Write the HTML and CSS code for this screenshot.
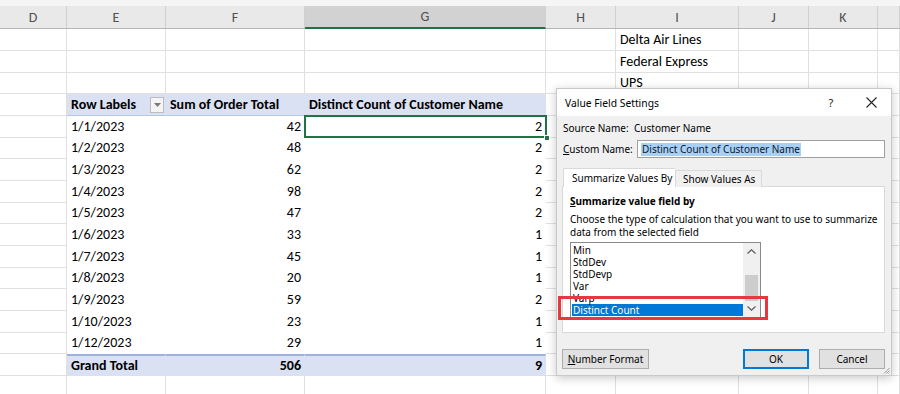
FILE: index.html
```html
<!DOCTYPE html>
<html>
<head>
<meta charset="utf-8">
<link rel="stylesheet" href="styles.css">
</head>
<body>
<div class="sheet">
  <div class="strip"></div>
  <div class="hdr">
    <div class="hc">D</div><div class="hc">E</div><div class="hc">F</div><div class="hc sel">G</div><div class="hc">H</div><div class="hc">I</div><div class="hc">J</div><div class="hc">K</div><div class="hc"></div>
  </div>
  <div class="row"><div class="c"></div><div class="c"></div><div class="c"></div><div class="c"></div><div class="c"></div><div class="c">Delta Air Lines</div><div class="c"></div><div class="c"></div><div class="c"></div></div>
  <div class="row"><div class="c"></div><div class="c"></div><div class="c"></div><div class="c"></div><div class="c"></div><div class="c">Federal Express</div><div class="c"></div><div class="c"></div><div class="c"></div></div>
  <div class="row"><div class="c"></div><div class="c"></div><div class="c"></div><div class="c"></div><div class="c"></div><div class="c">UPS</div><div class="c"></div><div class="c"></div><div class="c"></div></div>
  <div class="row"><div class="c"></div><div class="c p ph rl"><span>Row Labels</span><span class="dd"><svg width="7" height="4" viewBox="0 0 7 4"><path d="M0 0h7L3.5 4z" fill="#7a7a7a"/></svg></span></div><div class="c p ph">Sum of Order Total</div><div class="c p ph">Distinct Count of Customer Name</div><div class="c"></div><div class="c"></div><div class="c"></div><div class="c"></div><div class="c"></div></div>
  <div class="row"><div class="c"></div><div class="c p">1/1/2023</div><div class="c p r">42</div><div class="c p r selcell">2<span class="handle"></span></div><div class="c"></div><div class="c"></div><div class="c"></div><div class="c"></div><div class="c"></div></div>
  <div class="row"><div class="c"></div><div class="c p">1/2/2023</div><div class="c p r">48</div><div class="c p r">2</div><div class="c"></div><div class="c"></div><div class="c"></div><div class="c"></div><div class="c"></div></div>
  <div class="row"><div class="c"></div><div class="c p">1/3/2023</div><div class="c p r">62</div><div class="c p r">2</div><div class="c"></div><div class="c"></div><div class="c"></div><div class="c"></div><div class="c"></div></div>
  <div class="row"><div class="c"></div><div class="c p">1/4/2023</div><div class="c p r">98</div><div class="c p r">2</div><div class="c"></div><div class="c"></div><div class="c"></div><div class="c"></div><div class="c"></div></div>
  <div class="row"><div class="c"></div><div class="c p">1/5/2023</div><div class="c p r">47</div><div class="c p r">2</div><div class="c"></div><div class="c"></div><div class="c"></div><div class="c"></div><div class="c"></div></div>
  <div class="row"><div class="c"></div><div class="c p">1/6/2023</div><div class="c p r">33</div><div class="c p r">1</div><div class="c"></div><div class="c"></div><div class="c"></div><div class="c"></div><div class="c"></div></div>
  <div class="row"><div class="c"></div><div class="c p">1/7/2023</div><div class="c p r">45</div><div class="c p r">1</div><div class="c"></div><div class="c"></div><div class="c"></div><div class="c"></div><div class="c"></div></div>
  <div class="row"><div class="c"></div><div class="c p">1/8/2023</div><div class="c p r">20</div><div class="c p r">1</div><div class="c"></div><div class="c"></div><div class="c"></div><div class="c"></div><div class="c"></div></div>
  <div class="row"><div class="c"></div><div class="c p">1/9/2023</div><div class="c p r">59</div><div class="c p r">2</div><div class="c"></div><div class="c"></div><div class="c"></div><div class="c"></div><div class="c"></div></div>
  <div class="row"><div class="c"></div><div class="c p">1/10/2023</div><div class="c p r">23</div><div class="c p r">1</div><div class="c"></div><div class="c"></div><div class="c"></div><div class="c"></div><div class="c"></div></div>
  <div class="row"><div class="c"></div><div class="c p">1/12/2023</div><div class="c p r">29</div><div class="c p r">1</div><div class="c"></div><div class="c"></div><div class="c"></div><div class="c"></div><div class="c"></div></div>
  <div class="row"><div class="c"></div><div class="c p gt">Grand Total</div><div class="c p gt r">506</div><div class="c p gt r">9</div><div class="c"></div><div class="c"></div><div class="c"></div><div class="c"></div><div class="c"></div></div>
  <div class="row"><div class="c"></div><div class="c"></div><div class="c"></div><div class="c"></div><div class="c"></div><div class="c"></div><div class="c"></div><div class="c"></div><div class="c"></div></div>
</div>

<div class="dlg">
  <div class="dlg-title">
    <span class="ttl">Value Field Settings</span>
    <span class="help">?</span>
    <svg class="close" width="11" height="11" viewBox="0 0 11 11"><path d="M0.5 0.5L10.5 10.5M10.5 0.5L0.5 10.5" stroke="#222" stroke-width="1.1" fill="none"/></svg>
  </div>
  <div class="dlg-body">
    <div class="src"><span class="lbl src-l">Source Name:</span><span>Customer Name</span></div>
    <div class="cust"><span class="lbl cust-l"><u>C</u>ustom Name:</span><div class="input"><span class="hl">Distinct Count of Customer Name</span></div></div>
    <div class="tabs"><div class="tab active">Summarize Values By</div><div class="tab">Show Values As</div></div>
    <div class="panel">
      <div class="ptitle"><u>S</u>ummarize value field by</div>
      <div class="desc">Choose the type of calculation that you want to use to summarize<br>data from the selected field</div>
      <div class="list">
        <div class="items">
          <div class="it">Min</div>
          <div class="it">StdDev</div>
          <div class="it">StdDevp</div>
          <div class="it">Var</div>
          <div class="it">Varp</div>
          <div class="it on">Distinct Count</div>
        </div>
        <div class="sb">
          <div class="arr"><svg width="9" height="5" viewBox="0 0 9 5"><path d="M0.5 4.5L4.5 0.8L8.5 4.5" stroke="#606060" stroke-width="1.3" fill="none"/></svg></div>
          <div class="track"><div class="thumb"></div></div>
          <div class="arr"><svg width="9" height="5" viewBox="0 0 9 5"><path d="M0.5 0.5L4.5 4.2L8.5 0.5" stroke="#606060" stroke-width="1.3" fill="none"/></svg></div>
        </div>
      </div>
    </div>
    <div class="btns">
      <div class="btn nf"><u>N</u>umber Format</div>
      <div class="btn ok">OK</div>
      <div class="btn">Cancel</div>
    </div>
  </div>
  <svg class="grip" width="7" height="7" viewBox="0 0 7 7"><path d="M6.5 1L1 6.5M6.5 3.5L3.5 6.5M6.5 5.5L5.5 6.5" stroke="#9a9a9a" stroke-width="1" fill="none"/></svg>
</div>
<div class="redbox"></div>
</body>
</html>
```
FILE: styles.css
```css
* { box-sizing: border-box; }
body {
  margin: 0;
  width: 900px;
  height: 394px;
  overflow: hidden;
  background: #fff;
  position: relative;
  font-family: "Carlito", "Lato", "Liberation Sans", sans-serif;
  font-size: 14px;
  color: #000;
}
.sheet { display: flex; flex-direction: column; }
.strip { height: 6px; background: #f5f5f5; }
.hdr, .row {
  display: grid;
  grid-template-columns: 67px 99px 139px 241px 70px 123px 70px 69px 22px;
}
.hdr { height: 23px; background: #e9e9e9; border-bottom: 1px solid #b5b5b5; }
.hc {
  border-right: 1px solid #d0d0d0;
  display: flex;
  align-items: center;
  justify-content: center;
  color: #505050;
  font-size: 14px;
}
.hc.sel { background: #d2d2d2; border-bottom: 2px solid #217346; margin-bottom: -1px; }
.row { height: 21.667px; }
.c {
  border-right: 1px solid #e0e0e0;
  border-bottom: 1px solid #e0e0e0;
  padding: 1px 3px 0 4px;
  line-height: 20px;
  white-space: nowrap;
}
.c.p { border-color: transparent; border-right-color: transparent; }
.ph { background: #d9e1f2; font-weight: 700; border-bottom: 1px solid #b4c6e7 !important; }
.rl { display: flex; justify-content: space-between; align-items: center; padding-right: 1px; }
.dd {
  width: 14px; height: 16px;
  background: #f4f4f4;
  border: 1px solid #bdbdbd;
  display: flex; align-items: center; justify-content: center;
}
.r { text-align: right; }
.gt { background: #d9e1f2; font-weight: 700; border-top: 2px solid #9bb3de !important; line-height: 18px; }
.selcell { position: relative; }
.selcell::after {
  content: "";
  position: absolute;
  left: -1px; top: -1px; right: -2px; bottom: -1px;
  border: 2px solid #217346;
}
.handle {
  position: absolute;
  right: -5px; bottom: -4px;
  width: 6px; height: 6px;
  background: #217346;
  border: 1px solid #fff;
  z-index: 2;
}

/* dialog */
.dlg {
  position: absolute;
  left: 556px; top: 88px;
  width: 336px; height: 288px;
  background: #f0f0f0;
  border: 1px solid #c9c9c9;
  box-shadow: 0 2px 9px rgba(0,0,0,0.22);
  font-family: "Noto Sans", "Open Sans", sans-serif;
  font-size: 10px;
  color: #000;
  white-space: nowrap;
}
.dlg-title {
  height: 27px;
  background: #fff;
  display: flex;
  align-items: center;
  padding-left: 8px;
  font-size: 10.3px;
}
.help { margin-left: auto; width: 20px; text-align: center; font-size: 11px; color: #222; }
.close { margin-left: 25px; margin-right: 14px; }
.dlg-body { padding: 0 6px 0 5px; display: flex; flex-direction: column; }
.src { margin-top: 5px; height: 14px; line-height: 14px; display: flex; padding-left: 1px; }
.lbl { display: inline-block; }
.src-l { width: 71px; }
.cust { margin-top: 5px; display: flex; align-items: center; padding-left: 1px; }
.cust-l { width: 74px; }
.input {
  flex: 1;
  height: 18px;
  background: #fff;
  border: 1px solid #a0a0a0;
  padding-left: 3px;
  display: flex;
  align-items: center;
}
.hl { background: #a8d0f4; color: #0b1730; line-height: 13px; padding: 0 1px; }
.tabs { margin-top: 10px; display: flex; align-items: flex-end; padding-left: 1px; margin-bottom: -1px; position: relative; z-index: 1; }
.tab {
  height: 17px;
  line-height: 16px;
  padding: 0 7px;
  border: 1px solid #d9d9d9;
  border-bottom: none;
  background: #f0f0f0;
}
.tab.active { width: 112px; height: 19px; background: #fff; padding-left: 8px; line-height: 18px; border-right: none; }
.tab:not(.active) { width: 87px; }
.panel {
  height: 147px;
  background: #fff;
  border: 1px solid #d9d9d9;
  padding: 7px 0 0 7px;
}
.ptitle { font-weight: 700; line-height: 14px; }
.desc { margin-top: 5px; line-height: 13px; }
.list {
  margin-top: 3px;
  width: 191px;
  height: 76px;
  border: 1px solid #8a8a8a;
  display: flex;
  overflow: hidden;
}
.items { flex: 1; padding-top: 1px; overflow: hidden; }
.it { height: 12px; line-height: 12px; padding-left: 2px; }
.it.on { background: #0078d7; color: #fff; margin: 0 0 0 1px; padding-left: 1px; }
.sb { width: 17px; background: #f0f0f0; display: flex; flex-direction: column; }
.arr { height: 17px; display: flex; align-items: center; justify-content: center; }
.track { flex: 1; position: relative; }
.thumb { position: absolute; left: 2px; right: 2px; top: 15px; height: 26px; background: #cdcdcd; }
.btns { margin-top: 16px; display: flex; gap: 10px; }
.btn {
  height: 20px;
  width: 66px;
  background: #e1e1e1;
  border: 1px solid #adadad;
  display: flex; align-items: center; justify-content: center;
}
.btn.nf { width: 87px; margin-right: auto; }
.btn.ok { border-color: #0078d7; box-shadow: inset 0 0 0 1px #0078d7; }
.grip { position: absolute; right: 1px; bottom: 1px; }
.redbox {
  position: absolute;
  left: 558px; top: 296px;
  width: 210px; height: 24px;
  border: 3px solid #e8383d;
}
```
